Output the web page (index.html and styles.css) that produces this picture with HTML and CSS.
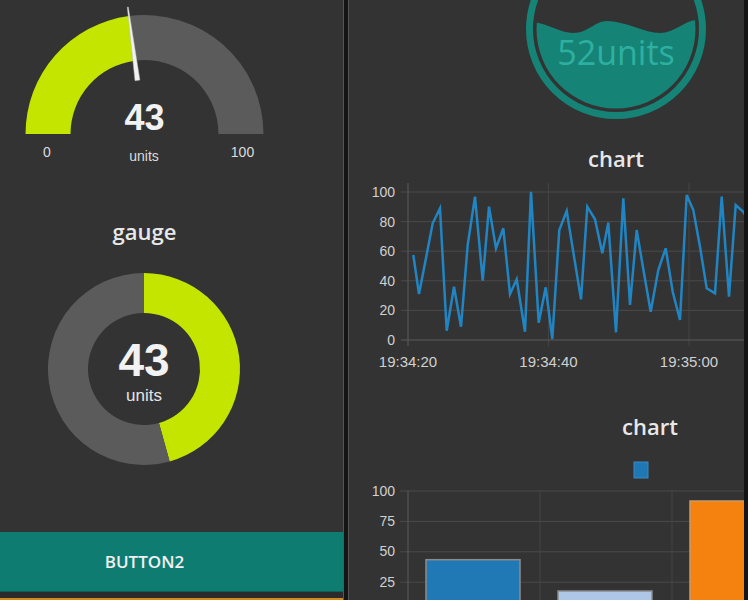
FILE: index.html
```html
<!DOCTYPE html>
<html lang="en">
<head>
    <meta charset="UTF-8">
    <meta name="viewport" content="width=device-width, initial-scale=1.0">
    <title>Node-RED Dashboard</title>
    <link rel="stylesheet" href="styles.css">
</head>
<body>

    <div class="column left">
        <svg class="gauge-half" width="343" height="180">
            <path class="arc-fill" d="M 25.5 134 A 119 119 0 0 1 128.97 16.02 L 134.84 60.64 A 74 74 0 0 0 70.5 134 Z"/>
            <path class="arc-rest" d="M 128.97 16.02 A 119 119 0 0 1 263.5 134 L 218.5 134 A 74 74 0 0 0 134.84 60.64 Z"/>
            <polygon class="needle" points="139.9,80.1 135.0,80.8 127.3,7.2 128.3,7.0"/>
            <text class="g-value" x="144.5" y="130">43</text>
            <text class="g-label" x="47" y="157">0</text>
            <text class="g-label" x="144" y="161">units</text>
            <text class="g-label" x="242.5" y="157">100</text>
        </svg>

        <div class="widget-title gauge-title">gauge</div>

        <svg class="gauge-donut" width="343" height="220">
            <path class="arc-fill" d="M 144 13 A 96 96 0 0 1 169.65 201.5 L 158.96 162.96 A 56 56 0 0 0 144 53 Z"/>
            <path class="arc-rest" d="M 169.65 201.5 A 96 96 0 1 1 144 13 L 144 53 A 56 56 0 1 0 158.96 162.96 Z"/>
            <text class="d-value" x="144" y="116">43</text>
            <text class="d-units" x="144" y="141">units</text>
        </svg>

        <button class="btn">BUTTON2</button>
        <div class="bottom-strip"></div>
    </div>

    <div class="gap"></div>

    <div class="column right">
        <svg class="liquid" width="395" height="140">
            <defs>
                <clipPath id="liquid-clip">
                    <circle cx="267" cy="29" r="79.5"/>
                </clipPath>
            </defs>
            <circle class="liquid-ring" cx="267" cy="29" r="86.5"/>
            <path class="liquid-wave" clip-path="url(#liquid-clip)" d="M 171 22 L 181 22 C 196 22, 211 33, 224 33 C 239 33, 246 21, 258 21 C 276 21, 296 33, 311 33 C 326 33, 336 20, 348 20 C 356 20, 361 22, 366 22 L 366 120 L 171 120 Z"/>
            <text class="liquid-text" x="267" y="65">52units</text>
        </svg>

        <div class="widget-title line-title">chart</div>

        <svg class="line-chart" width="395" height="200">
            <g class="grid">
                <line x1="52" y1="12" x2="395" y2="12"/>
                <line x1="52" y1="41.6" x2="395" y2="41.6"/>
                <line x1="52" y1="71.2" x2="395" y2="71.2"/>
                <line x1="52" y1="100.8" x2="395" y2="100.8"/>
                <line x1="52" y1="130.4" x2="395" y2="130.4"/>
            </g>
            <g class="grid grid-v">
                <line x1="199.5" y1="3" x2="199.5" y2="166"/>
                <line x1="340" y1="3" x2="340" y2="166"/>
            </g>
            <g class="axis">
                <line x1="52" y1="160" x2="395" y2="160"/>
                <line x1="59" y1="3" x2="59" y2="166"/>
            </g>
            <g class="tick-y">
                <text x="46" y="17">100</text>
                <text x="46" y="46.6">80</text>
                <text x="46" y="76.2">60</text>
                <text x="46" y="105.8">40</text>
                <text x="46" y="135.4">20</text>
                <text x="46" y="165">0</text>
            </g>
            <g class="tick-x">
                <text x="59" y="187">19:34:20</text>
                <text x="199.5" y="187">19:34:40</text>
                <text x="340" y="187">19:35:00</text>
            </g>
            <polyline class="series" points="64.3,75 70,114 76,83.3 83.7,43.3 91,28.3 97.7,150.7 105,106.7 112,146.7 118.7,65 126,16.7 133.7,100.7 140,26.7 147,68.3 154.3,48.3 161,114 167.7,99.3 176,151.7 182,11.7 189.7,142.7 196.7,107.3 203.3,159 210.3,50 217.7,31 225.3,78.3 232,119.3 238.3,26.7 246,39.3 253.3,73.3 259.3,42.7 267,152.3 274.3,18.3 281,125 287.7,50 295,93.3 301.7,131.7 309.3,90 316.7,68.3 323.7,111.7 331,140 337.7,15 344.3,30 351,66.7 357.7,108.3 366,113.3 372.7,16.7 380,116.7 386.7,25 394.3,31.7 401,43.3"/>
        </svg>

        <div class="widget-title bar-title">chart</div>

        <svg class="bar-chart" width="395" height="150">
            <rect class="legend" x="285" y="12" width="14" height="16"/>
            <g class="grid">
                <line x1="51" y1="41" x2="395" y2="41"/>
                <line x1="51" y1="71.4" x2="395" y2="71.4"/>
                <line x1="51" y1="101.8" x2="395" y2="101.8"/>
                <line x1="51" y1="132.2" x2="395" y2="132.2"/>
            </g>
            <g class="grid grid-v">
                <line x1="191" y1="41" x2="191" y2="150"/>
                <line x1="323" y1="41" x2="323" y2="150"/>
            </g>
            <g class="axis">
                <line x1="59" y1="41" x2="59" y2="150"/>
            </g>
            <g class="tick-y">
                <text x="46" y="45.5">100</text>
                <text x="46" y="75.9">75</text>
                <text x="46" y="106.3">50</text>
                <text x="46" y="136.7">25</text>
            </g>
            <rect class="bar bar-1" x="77" y="109.7" width="94" height="60"/>
            <rect class="bar bar-2" x="209" y="141" width="94" height="30"/>
            <rect class="bar bar-3" x="341" y="51" width="94" height="120"/>
        </svg>
    </div>

    <div class="edge"></div>

</body>
</html>
```

FILE: styles.css
```css
body {
    margin: 0;
    height: 600px;
    overflow: hidden;
    display: flex;
    background-color: #141414;
    font-family: "Open Sans", Arial, sans-serif;
    color: #e8e8e8;
}

.column {
    display: flex;
    flex-direction: column;
    background-color: #333333;
    height: 600px;
    overflow: hidden;
}

.column svg {
    display: block;
    flex-shrink: 0;
}

.left {
    width: 343px;
    border-right: 1px solid #555;
}

.gap {
    width: 4px;
}

.right {
    width: 395px;
    border-left: 1px solid #555;
}

.edge {
    width: 4px;
}

/* gauges */
.arc-fill {
    fill: #c4e500;
}

.arc-rest {
    fill: #5b5b5b;
}

.needle {
    fill: #f2f2f2;
    stroke: #bbb;
    stroke-width: 0.5;
}

.g-value,
.d-value {
    font-family: "Liberation Sans", Arial, sans-serif;
    font-weight: bold;
    font-size: 36px;
    fill: #f2f2f2;
    text-anchor: middle;
}

.d-value {
    font-size: 46px;
}

.g-label,
.d-units {
    font-family: "Liberation Sans", Arial, sans-serif;
    font-size: 14px;
    fill: #dcdcdc;
    text-anchor: middle;
}

.d-units {
    font-size: 17px;
    fill: #e4e4e4;
}

.widget-title {
    flex-shrink: 0;
    box-sizing: border-box;
    font-size: 22px;
    font-weight: 600;
    line-height: 30px;
    text-align: center;
    color: #e8e8e8;
}

.gauge-title {
    height: 80px;
    padding-top: 36px;
    padding-right: 54px;
}

.line-title {
    height: 40px;
    padding-top: 3px;
    padding-left: 139px;
}

.bar-title {
    height: 70px;
    padding-top: 31px;
    padding-left: 207px;
}

/* button */
.btn {
    flex-shrink: 0;
    margin-top: 52px;
    height: 60px;
    width: 100%;
    border: none;
    border-bottom: 1px solid #0b6259;
    background-color: #0f7c72;
    color: #f0f0f0;
    font-family: "Open Sans", Arial, sans-serif;
    font-size: 17px;
    font-weight: 600;
    line-height: 60px;
    padding: 0 54px 0 0;
    cursor: pointer;
}

.btn:hover {
    background-color: #12897e;
}

.bottom-strip {
    flex-shrink: 0;
    height: 6px;
    background-color: #2b2b2b;
    border-bottom: 2px solid #d08b1c;
}

/* liquid gauge */
.liquid-ring {
    fill: none;
    stroke: #168377;
    stroke-width: 7;
}

.liquid-wave {
    fill: #168377;
}

.liquid-text {
    font-family: "Open Sans", Arial, sans-serif;
    font-size: 34px;
    fill: #2eb0a1;
    text-anchor: middle;
}

/* charts */
.grid line {
    stroke: #4a4a4a;
    stroke-width: 1;
}

.grid-v line {
    stroke: #444;
}

.axis line {
    stroke: #5c5c5c;
    stroke-width: 1;
}

.tick-y text,
.tick-x text {
    font-family: "Liberation Sans", Arial, sans-serif;
    font-size: 14px;
    fill: #d0d0d0;
}

.tick-y text {
    text-anchor: end;
}

.tick-x text {
    font-size: 15px;
    text-anchor: middle;
}

.series {
    fill: none;
    stroke: #2185c3;
    stroke-width: 2.5;
    stroke-linejoin: miter;
}

.legend {
    fill: #1f77b4;
    stroke: #3a8ac2;
    stroke-width: 1;
}

.bar {
    stroke: #8c8c8c;
    stroke-width: 1.5;
}

.bar-1 {
    fill: #2078b4;
}

.bar-2 {
    fill: #aec7e6;
}

.bar-3 {
    fill: #f5820f;
    stroke: #c99a6a;
}
```
